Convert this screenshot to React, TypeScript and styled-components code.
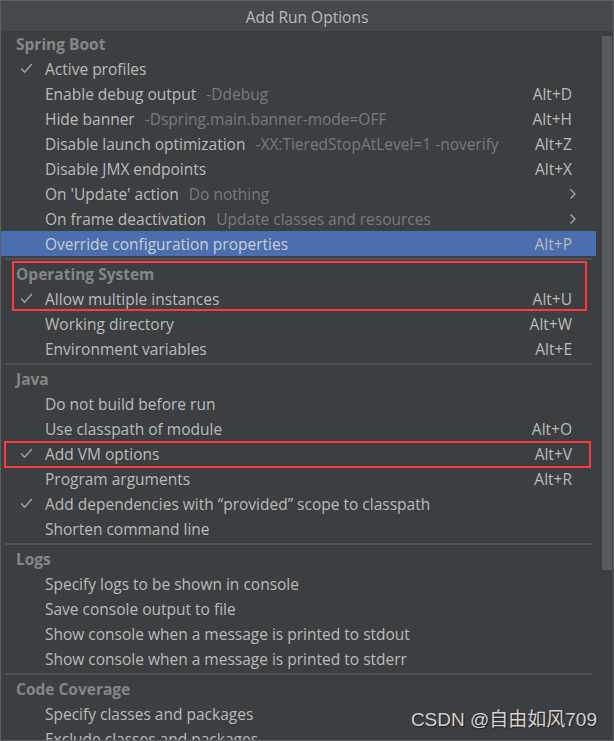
import styled, { createGlobalStyle } from "styled-components";

const GlobalStyle = createGlobalStyle`
    * { box-sizing: border-box; }
    body {
        margin: 0;
        background: #3c3f41;
        font-family: "Open Sans", "Noto Sans", sans-serif;
    }
`

const Window = styled.div`
    position: relative;
    width: 614px;
    height: 741px;
    border: 1px solid #5e6163;
    background: #3c3f41;
    display: flex;
    flex-direction: column;
    overflow: hidden;
`

const TitleBar = styled.div`
    height: 30px;
    flex-shrink: 0;
    background: #46494b;
    color: #bbbbbb;
    font-size: 15.5px;
    padding-top: 1px;
    display: flex;
    align-items: center;
    justify-content: center;
`

const Body = styled.div`
    display: flex;
    flex: 1;
    min-height: 0;
`

const List = styled.div`
    flex: 1;
    display: flex;
    flex-direction: column;
`

const Gutter = styled.div`
    width: 17px;
    flex-shrink: 0;
    padding: 5px 1px 0 6px;
`

const Thumb = styled.div`
    width: 10px;
    height: 534px;
    background: #595c5e;
`

const Header = styled.div`
    height: 25px;
    flex-shrink: 0;
    display: flex;
    align-items: center;
    padding-left: 15px;
    color: #868686;
    font-size: 15.5px;
    font-weight: 700;
`

const Row = styled.div<{ $selected?: boolean }>`
    height: 25px;
    flex-shrink: 0;
    display: flex;
    align-items: center;
    padding: 0 24px 0 19px;
    font-size: 15.5px;
    white-space: nowrap;
    color: ${p => (p.$selected ? "#c9ced7" : "#bbbbbb")};
    background: ${p => (p.$selected ? "#4b6eaf" : "transparent")};
`

const CheckSlot = styled.span`
    width: 25px;
    flex-shrink: 0;
    display: flex;
    align-items: center;
`

const Label = styled.span``

const Hint = styled.span`
    margin-left: 10px;
    color: #787b7d;
`

const Shortcut = styled.span`
    margin-left: auto;
    color: #bbbbbb;
`

const Chevron = styled.svg`
    margin-left: auto;
    margin-right: -5px;
`

const Separator = styled.div`
    height: 5px;
    flex-shrink: 0;
    padding: 2px 4px 0 4px;

    &::after {
        content: "";
        display: block;
        height: 2px;
        background: #4f5254;
    }
`

const Annotated = styled.div<{ $left: number; $right: number; $bottom: number }>`
    position: relative;
    display: flex;
    flex-direction: column;

    &::after {
        content: "";
        position: absolute;
        top: 0;
        left: ${p => p.$left}px;
        right: ${p => p.$right}px;
        bottom: ${p => p.$bottom}px;
        border: 2px solid #fa3b3b;
        pointer-events: none;
    }
`

const Watermark = styled.div`
    position: absolute;
    right: 16px;
    bottom: 9px;
    font-family: "Liberation Sans", "Noto Sans CJK SC", sans-serif;
    font-size: 19px;
    color: #d2d2d2;
    text-shadow: 1px 1px 1px #1e1e1e;
`

type Item = {
    label: string;
    hint?: string;
    shortcut?: string;
    checked?: boolean;
    submenu?: boolean;
    selected?: boolean;
}

const Check = () => (
    <svg width="13" height="11" viewBox="0 0 13 11">
        <path d="M1.2 5.6 L4.6 9.2 L11.8 1" fill="none" stroke="#a3a3a3" strokeWidth="1.4" />
    </svg>
)

const MenuRow = ({ item }: { item: Item }) => (
    <Row $selected={item.selected}>
        <CheckSlot>{item.checked && <Check />}</CheckSlot>
        <Label>{item.label}</Label>
        {item.hint && <Hint>{item.hint}</Hint>}
        {item.shortcut && <Shortcut>{item.shortcut}</Shortcut>}
        {item.submenu && (
            <Chevron width="8" height="12" viewBox="0 0 8 12">
                <path d="M1.5 1.5 L6 6 L1.5 10.5" fill="none" stroke="#a9a9a9" strokeWidth="1.3" />
            </Chevron>
        )}
    </Row>
)

const springBoot: Item[] = [
    { label: "Active profiles", checked: true },
    { label: "Enable debug output", hint: "-Ddebug", shortcut: "Alt+D" },
    { label: "Hide banner", hint: "-Dspring.main.banner-mode=OFF", shortcut: "Alt+H" },
    { label: "Disable launch optimization", hint: "-XX:TieredStopAtLevel=1 -noverify", shortcut: "Alt+Z" },
    { label: "Disable JMX endpoints", shortcut: "Alt+X" },
    { label: "On 'Update' action", hint: "Do nothing", submenu: true },
    { label: "On frame deactivation", hint: "Update classes and resources", submenu: true },
    { label: "Override configuration properties", shortcut: "Alt+P", selected: true },
]

const logs: Item[] = [
    { label: "Specify logs to be shown in console" },
    { label: "Save console output to file" },
    { label: "Show console when a message is printed to stdout" },
    { label: "Show console when a message is printed to stderr" },
]

const coverage: Item[] = [
    { label: "Specify classes and packages" },
    { label: "Exclude classes and packages" },
]

const App = (): JSX.Element => {
    return (
        <>
            <GlobalStyle />
            <Window>
                <TitleBar>Add Run Options</TitleBar>
                <Body>
                    <List>
                        <Header>Spring Boot</Header>
                        {springBoot.map(i => <MenuRow key={i.label} item={i} />)}
                        <Separator />
                        <Annotated $left={11} $right={9} $bottom={0}>
                            <Header>Operating System</Header>
                            <MenuRow item={{ label: "Allow multiple instances", shortcut: "Alt+U", checked: true }} />
                        </Annotated>
                        <MenuRow item={{ label: "Working directory", shortcut: "Alt+W" }} />
                        <MenuRow item={{ label: "Environment variables", shortcut: "Alt+E" }} />
                        <Separator />
                        <Header>Java</Header>
                        <MenuRow item={{ label: "Do not build before run" }} />
                        <MenuRow item={{ label: "Use classpath of module", shortcut: "Alt+O" }} />
                        <Annotated $left={3} $right={5} $bottom={-2}>
                            <MenuRow item={{ label: "Add VM options", shortcut: "Alt+V", checked: true }} />
                        </Annotated>
                        <MenuRow item={{ label: "Program arguments", shortcut: "Alt+R" }} />
                        <MenuRow item={{ label: "Add dependencies with \u201Cprovided\u201D scope to classpath", checked: true }} />
                        <MenuRow item={{ label: "Shorten command line" }} />
                        <Separator />
                        <Header>Logs</Header>
                        {logs.map(i => <MenuRow key={i.label} item={i} />)}
                        <Separator />
                        <Header>Code Coverage</Header>
                        {coverage.map(i => <MenuRow key={i.label} item={i} />)}
                    </List>
                    <Gutter>
                        <Thumb />
                    </Gutter>
                </Body>
                <Watermark>CSDN @自由如风709</Watermark>
            </Window>
        </>
    );
}

export default App;
